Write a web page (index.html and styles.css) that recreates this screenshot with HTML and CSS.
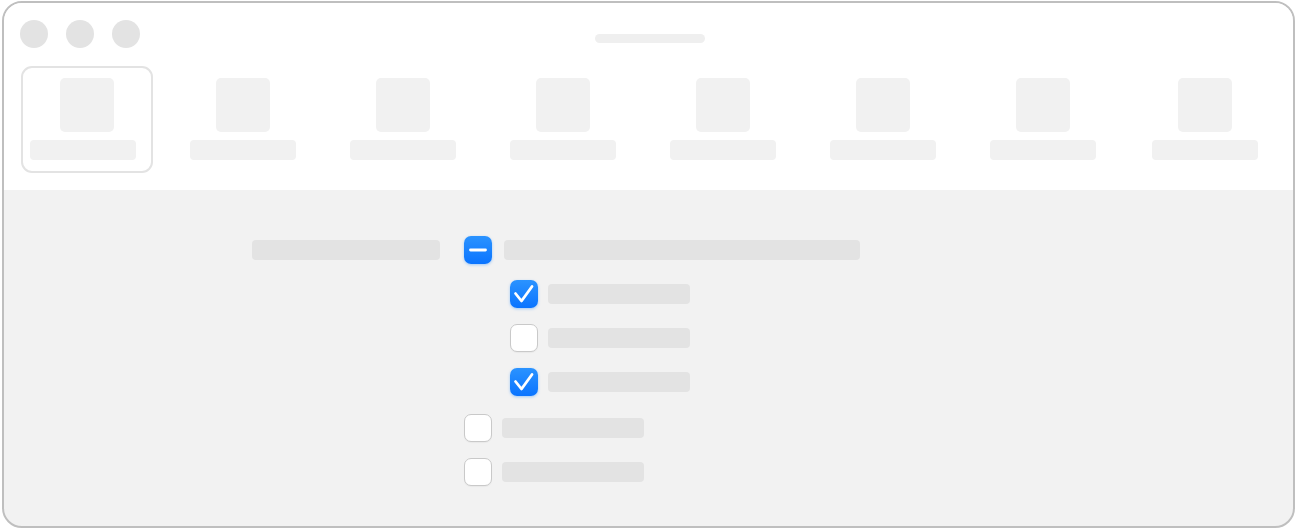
FILE: index.html
```html
<!DOCTYPE html>
<html lang="en">
<head>
    <meta charset="UTF-8">
    <meta name="viewport" content="width=device-width, initial-scale=1.0">
    <title>Settings placeholder</title>
    <link rel="stylesheet" href="styles.css">
</head>
<body>
    <div class="window">
        <header class="toolbar">
            <div class="titlebar">
                <div class="lights">
                    <span class="light"></span>
                    <span class="light"></span>
                    <span class="light"></span>
                </div>
                <span class="title"></span>
            </div>

            <nav class="tabs">
                <div class="tab selected">
                    <span class="tab-icon"></span>
                    <span class="tab-label"></span>
                </div>
                <div class="tab">
                    <span class="tab-icon"></span>
                    <span class="tab-label"></span>
                </div>
                <div class="tab">
                    <span class="tab-icon"></span>
                    <span class="tab-label"></span>
                </div>
                <div class="tab">
                    <span class="tab-icon"></span>
                    <span class="tab-label"></span>
                </div>
                <div class="tab">
                    <span class="tab-icon"></span>
                    <span class="tab-label"></span>
                </div>
                <div class="tab">
                    <span class="tab-icon"></span>
                    <span class="tab-label"></span>
                </div>
                <div class="tab">
                    <span class="tab-icon"></span>
                    <span class="tab-label"></span>
                </div>
                <div class="tab last">
                    <span class="tab-icon"></span>
                    <span class="tab-label"></span>
                </div>
            </nav>
        </header>

        <main class="pane">
            <div class="form-row">
                <span class="row-label"></span>
                <div class="options">
                    <div class="option parent">
                        <span class="checkbox on">
                            <svg viewBox="0 0 28 28" width="28" height="28"><path d="M6.5 14h15" /></svg>
                        </span>
                        <span class="option-text wide"></span>
                    </div>

                    <div class="group">
                        <div class="option">
                            <span class="checkbox on">
                                <svg viewBox="0 0 28 28" width="28" height="28"><path d="M5.5 13.5l6 7.5 10.5-14.5" /></svg>
                            </span>
                            <span class="option-text"></span>
                        </div>
                        <div class="option">
                            <span class="checkbox"></span>
                            <span class="option-text"></span>
                        </div>
                        <div class="option">
                            <span class="checkbox on">
                                <svg viewBox="0 0 28 28" width="28" height="28"><path d="M5.5 13.5l6 7.5 10.5-14.5" /></svg>
                            </span>
                            <span class="option-text"></span>
                        </div>
                    </div>

                    <div class="option spaced">
                        <span class="checkbox"></span>
                        <span class="option-text"></span>
                    </div>
                    <div class="option">
                        <span class="checkbox"></span>
                        <span class="option-text"></span>
                    </div>
                </div>
            </div>
        </main>
    </div>
</body>
</html>
```

FILE: styles.css
```css
* {
    margin: 0;
    padding: 0;
    box-sizing: border-box;
}

body {
    font-family: "Liberation Sans", Arial, sans-serif;
    background-color: #fff;
    padding: 1px 0 0 2px;
}

.window {
    width: 1293px;
    height: 527px;
    border: 2px solid #bfbfbf;
    border-radius: 20px;
    overflow: hidden;
    display: flex;
    flex-direction: column;
    background-color: #f2f2f2;
}

/* top area */
.toolbar {
    background-color: #fff;
    height: 187px;
    padding: 17px 0 0 17px;
}

.titlebar {
    display: grid;
    grid-template-columns: 1fr auto 1fr;
    height: 28px;
}

.lights {
    display: flex;
    gap: 18px;
    margin-left: -1px;
}

.light {
    width: 28px;
    height: 28px;
    border-radius: 50%;
    background-color: #e3e3e3;
}

.title {
    width: 110px;
    height: 9px;
    margin-top: 14px;
    margin-left: -14px;
    border-radius: 5px;
    background-color: #efefef;
}

.tabs {
    display: flex;
    gap: 28px;
    margin-top: 18px;
}

.tab {
    display: flex;
    flex-direction: column;
    align-items: flex-start;
    gap: 8px;
    padding: 10px 15px 11px 7px;
    border: 2px solid transparent;
    border-radius: 11px;
}

.tab.selected {
    border-color: #e3e3e3;
}

.tab.last {
    margin-left: 2px;
}

.tab-icon {
    width: 54px;
    height: 54px;
    margin-left: 26px;
    border-radius: 5px;
    background-color: #f1f1f1;
}

.tab.selected .tab-icon {
    margin-left: 30px;
}

.tab-label {
    width: 106px;
    height: 20px;
    border-radius: 4px;
    background-color: #f1f1f1;
}

/* settings pane */
.pane {
    flex: 1;
    padding: 46px 0 0 248px;
}

.form-row {
    display: flex;
    align-items: flex-start;
}

.row-label {
    width: 188px;
    height: 20px;
    margin-top: 4px;
    margin-right: 24px;
    border-radius: 4px;
    background-color: #e3e3e3;
}

.options {
    display: flex;
    flex-direction: column;
    gap: 16px;
}

.group {
    display: flex;
    flex-direction: column;
    gap: 16px;
    padding-left: 46px;
}

.option {
    display: flex;
    align-items: center;
    gap: 10px;
}

.option.parent {
    gap: 12px;
}

.option.spaced {
    margin-top: 2px;
}

.option-text {
    width: 142px;
    height: 20px;
    border-radius: 4px;
    background-color: #e3e3e3;
}

.option-text.wide {
    width: 356px;
}

.checkbox {
    width: 28px;
    height: 28px;
    border-radius: 7px;
    border: 1px solid #c9c9c9;
    background-color: #fff;
    box-shadow: 0 1px 1px rgba(0, 0, 0, 0.04);
}

.checkbox.on {
    border: none;
    background: linear-gradient(#2b93ff, #0a74ff);
    box-shadow: 0 1px 3px rgba(0, 122, 255, 0.35);
}

.checkbox svg {
    display: block;
    fill: none;
    stroke: #fff;
    stroke-width: 2.8;
    stroke-linecap: round;
    stroke-linejoin: round;
}
```
